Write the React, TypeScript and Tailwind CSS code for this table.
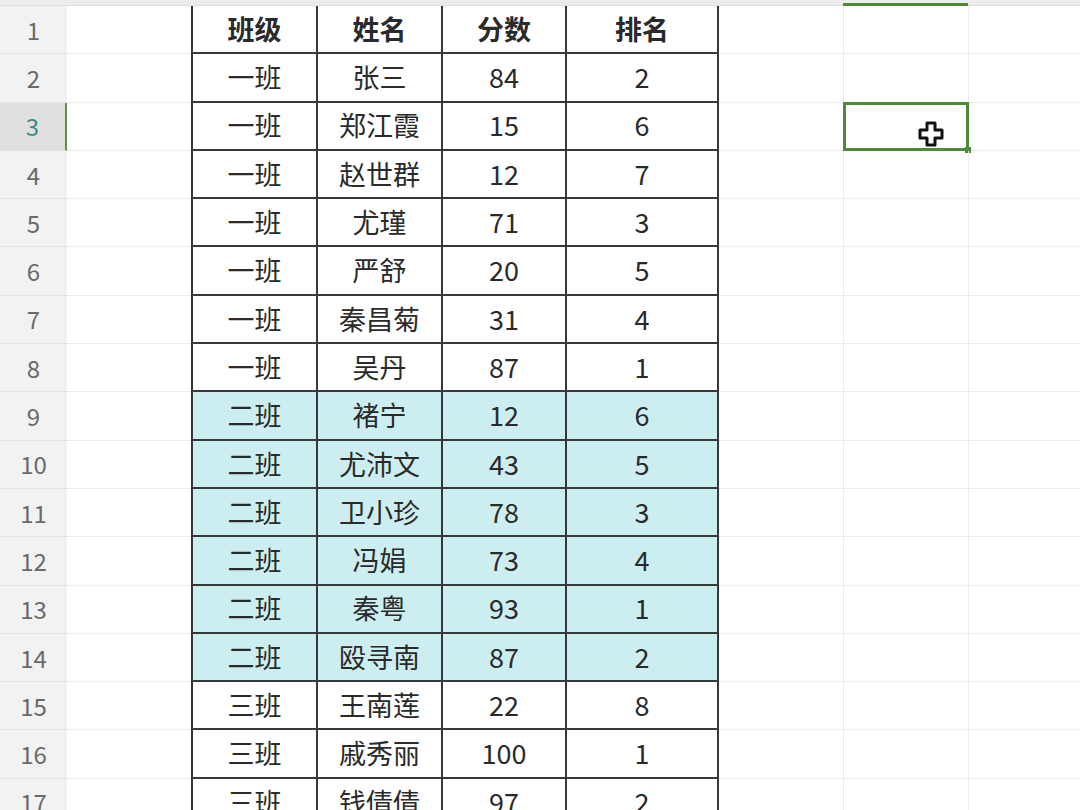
import React from "react";

type Row = { cls: string; name: string; score: string; rank: string; hl?: boolean; head?: boolean };

const rows: Row[] = [
  { cls: "班级", name: "姓名", score: "分数", rank: "排名", head: true },
  { cls: "一班", name: "张三", score: "84", rank: "2" },
  { cls: "一班", name: "郑江霞", score: "15", rank: "6" },
  { cls: "一班", name: "赵世群", score: "12", rank: "7" },
  { cls: "一班", name: "尤瑾", score: "71", rank: "3" },
  { cls: "一班", name: "严舒", score: "20", rank: "5" },
  { cls: "一班", name: "秦昌菊", score: "31", rank: "4" },
  { cls: "一班", name: "吴丹", score: "87", rank: "1" },
  { cls: "二班", name: "褚宁", score: "12", rank: "6", hl: true },
  { cls: "二班", name: "尤沛文", score: "43", rank: "5", hl: true },
  { cls: "二班", name: "卫小珍", score: "78", rank: "3", hl: true },
  { cls: "二班", name: "冯娟", score: "73", rank: "4", hl: true },
  { cls: "二班", name: "秦粤", score: "93", rank: "1", hl: true },
  { cls: "二班", name: "殴寻南", score: "87", rank: "2", hl: true },
  { cls: "三班", name: "王南莲", score: "22", rank: "8" },
  { cls: "三班", name: "戚秀丽", score: "100", rank: "1" },
  { cls: "三班", name: "钱倩倩", score: "97", rank: "2" },
];

const CrossCursor = () => (
  <svg width="26" height="26" viewBox="0 0 26 26">
    <path
      d="M9 2h8v7h7v8h-7v7H9v-7H2V9h7z"
      fill="#ffffff"
      stroke="#111111"
      strokeWidth="3"
      strokeLinejoin="round"
    />
  </svg>
);

export default function App() {
  return (
    <div
      className="w-[1080px] h-[810px] overflow-hidden bg-white"
      style={{ fontFamily: '"Noto Sans CJK SC", "Noto Sans", sans-serif' }}
    >
      {/* column header strip, mostly cut off */}
      <div className="flex h-[6px] bg-[#ececec] border-b border-[#dedede]">
        <div className="w-[843px]" />
        <div className="w-[125px] mt-[3px] h-[3px] bg-[#4f8a36]" />
      </div>

      {rows.map((r, i) => {
        const n = i + 1;
        const sel = n === 3;
        const cell = `flex items-center justify-center border-r-2 border-b-2 border-[#383838] text-[27px] text-[#2a2a2a] ${
          r.hl ? "bg-[#cdeef0]" : "bg-white"
        } ${r.head ? "font-bold" : ""}`;
        return (
          <div key={n} className="flex h-[48.3px]">
            <div
              className={`w-[67px] shrink-0 flex items-center justify-center text-[24px] border-b border-[#e2e2e2] ${
                sel
                  ? "bg-[#e0e0e0] text-[#3d8a8a] border-r-2 border-r-[#5a9440]"
                  : "bg-[#f2f2f2] text-[#6a6a6a]"
              }`}
            >
              {n}
            </div>
            <div className="w-[124px] shrink-0 border-b border-[#ececec]" />
            <div className={`w-[127px] shrink-0 border-l-2 ${cell}`}>{r.cls}</div>
            <div className={`w-[125px] shrink-0 ${cell}`}>{r.name}</div>
            <div className={`w-[124px] shrink-0 ${cell}`}>{r.score}</div>
            <div className={`w-[152px] shrink-0 ${cell}`}>{r.rank}</div>
            <div className="w-[125px] shrink-0 border-r border-b border-[#ececec]" />
            <div className="relative w-[125px] shrink-0 border-r border-b border-[#ececec]">
              {sel && (
                <>
                  <div className="absolute -left-px -top-px right-[-1px] bottom-[-1px] border-[3px] border-[#4f8a36]" />
                  <div className="absolute right-[-3px] bottom-[-3px] w-[6px] h-[6px] bg-[#4f8a36]" />
                  <div className="absolute left-[74px] top-[18px]">
                    <CrossCursor />
                  </div>
                </>
              )}
            </div>
            <div className="flex-1 border-b border-[#ececec]" />
          </div>
        );
      })}
    </div>
  );
}
